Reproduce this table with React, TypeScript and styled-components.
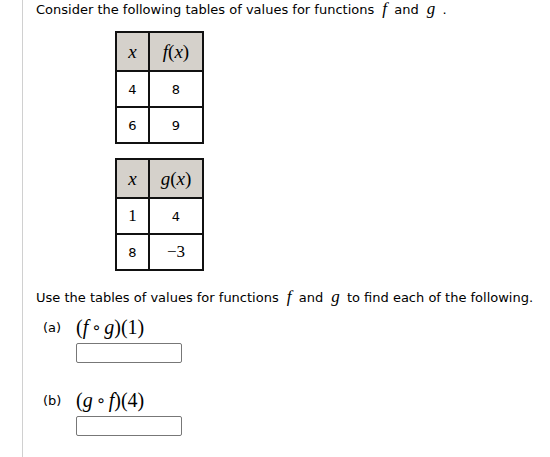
import styled, { createGlobalStyle } from "styled-components";

const GlobalStyle = createGlobalStyle`
    html, body {
        margin: 0;
        padding: 0;
        background: #fff;
    }
    body {
        font-family: "DejaVu Sans", Verdana, sans-serif;
        color: #000;
    }
`;

interface Row {
    x: React.ReactNode;
    y: React.ReactNode;
}

const ValueTable: React.FC<{ name: string; rows: Row[]; first?: boolean }> = ({ name, rows, first }) => (
    <Table $first={first}>
        <tbody>
            <tr>
                <HeadCell $width={31}>
                    <HeadFill>
                        <Var $size={19}>x</Var>
                    </HeadFill>
                </HeadCell>
                <HeadCell $width={52}>
                    <HeadFill>
                        <Var $size={19}>{name}</Var>
                        <Num $size={19}>(</Num>
                        <Var $size={19}>x</Var>
                        <Num $size={19}>)</Num>
                    </HeadFill>
                </HeadCell>
            </tr>
            {rows.map((r, i) => (
                <tr key={i}>
                    <Cell>{r.x}</Cell>
                    <Cell>{r.y}</Cell>
                </tr>
            ))}
        </tbody>
    </Table>
);

const Part: React.FC<{ label: string; children: React.ReactNode; first?: boolean }> = ({ label, children, first }) => (
    <PartBlock $first={first}>
        <PartLine>
            <Label>{label}</Label>
            <Expr>{children}</Expr>
        </PartLine>
        <AnswerBox type="text" />
    </PartBlock>
);

const App: React.FC = () => {
    const fRows: Row[] = [
        { x: "4", y: "8" },
        { x: "6", y: "9" },
    ];
    const gRows: Row[] = [
        { x: <Num>1</Num>, y: "4" },
        { x: "8", y: <Num>−3</Num> },
    ];

    return (
        <Page>
            <GlobalStyle />
            <Content>
                <Prompt>
                    Consider the following tables of values for functions <InlineVar>f</InlineVar> and{" "}
                    <InlineVar>g</InlineVar> .
                </Prompt>
                <ValueTable name="f" rows={fRows} first />
                <ValueTable name="g" rows={gRows} />
                <Prompt $gap={17}>
                    Use the tables of values for functions <InlineVar>f</InlineVar> and <InlineVar>g</InlineVar> to
                    find each of the following.
                </Prompt>
                <Part label="(a)" first>
                    <Num $size={20}>(</Num>
                    <Var $size={20}>f</Var>
                    <Compose>∘</Compose>
                    <Var $size={20}>g</Var>
                    <Num $size={20}>)(1)</Num>
                </Part>
                <Part label="(b)">
                    <Num $size={20}>(</Num>
                    <Var $size={20}>g</Var>
                    <Compose>∘</Compose>
                    <Var $size={20}>f</Var>
                    <Num $size={20}>)(4)</Num>
                </Part>
            </Content>
        </Page>
    );
};

const Page = styled.div`
    width: 550px;
    min-height: 457px;
    padding-left: 22px;
    box-sizing: border-box;
`;

const Content = styled.div`
    min-height: 457px;
    border-left: 1px solid #d0d0d0;
    padding-left: 13px;
    box-sizing: border-box;
`;

const Prompt = styled.div<{ $gap?: number }>`
    margin-top: ${(p) => p.$gap ?? 0}px;
    font-size: 13px;
    line-height: 18px;
    white-space: nowrap;
`;

const Var = styled.span<{ $size?: number }>`
    font-family: "Liberation Serif", "DejaVu Serif", serif;
    font-style: italic;
    font-size: ${(p) => p.$size ?? 17}px;
`;

const InlineVar = styled(Var)`
    margin: 0 3px 0 4px;
`;

const Num = styled.span<{ $size?: number }>`
    font-family: "Liberation Serif", "DejaVu Serif", serif;
    font-size: ${(p) => p.$size ?? 17}px;
`;

const Compose = styled.span`
    font-family: "DejaVu Sans", sans-serif;
    font-size: 16px;
    margin: 0 3px;
    position: relative;
    top: -1px;
`;

const Table = styled.table<{ $first?: boolean }>`
    margin-top: ${(p) => (p.$first ? 12 : 14)}px;
    margin-left: 79px;
    border-collapse: collapse;
    border: 2px solid #111;
`;

const HeadCell = styled.td<{ $width: number }>`
    width: ${(p) => p.$width}px;
    height: 37px;
    padding: 0;
    background: #d5d1cb;
    border: 2px solid #111;
`;

const HeadFill = styled.div`
    display: flex;
    align-items: center;
    justify-content: center;
    height: 37px;
    background: #d5d1cb;
`;

const Cell = styled.td`
    height: 34px;
    padding: 0;
    border: 2px solid #111;
    font-size: 13px;
    text-align: center;
`;

const PartBlock = styled.div<{ $first?: boolean }>`
    margin-top: ${(p) => (p.$first ? 9 : 26)}px;
    padding-left: 7px;
`;

const PartLine = styled.div`
    display: flex;
    align-items: center;
    height: 22px;
    white-space: nowrap;
`;

const Label = styled.span`
    width: 33px;
    flex-shrink: 0;
    font-size: 13px;
`;

const Expr = styled.span`
    display: inline-flex;
    align-items: baseline;
`;

const AnswerBox = styled.input`
    display: block;
    margin: 5px 0 0 33px;
    width: 106px;
    height: 20px;
    box-sizing: border-box;
    border: 1px solid #777;
    border-radius: 2px;
    outline: none;
    padding: 0 4px;
    background: #fff;
`;

export default App;
